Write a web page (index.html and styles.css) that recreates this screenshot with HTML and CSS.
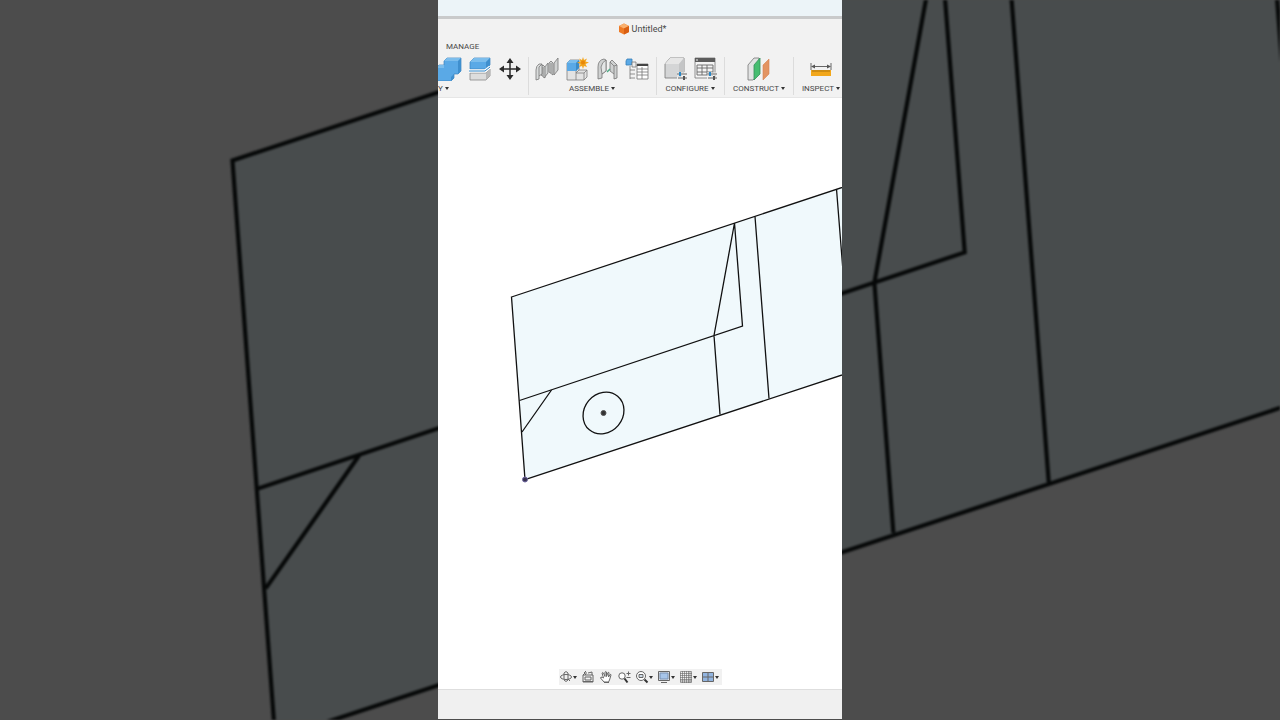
FILE: index.html
```html
<!DOCTYPE html>
<html lang="en">
<head>
    <meta charset="UTF-8">
    <meta name="viewport" content="width=device-width, initial-scale=1.0">
    <title>Untitled*</title>
    <link rel="stylesheet" href="styles.css">
</head>
<body>
    <!-- enlarged sketch behind the window -->
    <svg class="backdrop" viewBox="0 0 1280 720" preserveAspectRatio="xMidYMid slice" aria-hidden="true">
        <use href="#sketch" transform="translate(-1389 -781) scale(3.17)"/>
    </svg>

    <main class="window">
        <div class="strip"></div>
        <header>
            <h1 class="title">
                <svg width="12" height="12" viewBox="0 0 12 12">
                    <path d="M6 .5L11 3v6L6 11.5 1 9V3z" fill="#ee7a25"/>
                    <path d="M6 .5L11 3 6 5.500 1 3z" fill="#f9b06e"/>
                    <path d="M6 5.500L11 3v6l-5 2.500z" fill="#d95f12"/>
                </svg>
                <span>Untitled*</span>
            </h1>
            <nav class="tabs"><a href="#">MANAGE</a></nav>
            <div class="toolbar">
                <section class="group first">
                    <div class="tools">
                        <button aria-label="Combine">
                            <svg viewBox="0 0 24 24">
                                <path d="M-2 11l3-3h5V4l3-3h14v13l-3 3h-4v4l-3 3H-2z" fill="#5aa9e6" stroke="#3b82bd" stroke-width=".7"/>
                                <path d="M6 4l3-3h14l-3 3zM-2 11l3-3h5v3z" fill="#7cbdec"/>
                                <path d="M20 4l3-3v13l-3 3zM13 20l3-3v4l-3 3z" fill="#3f8fce"/>
                            </svg>
                        </button>
                        <button aria-label="Split body">
                            <svg viewBox="0 0 24 24">
                                <path d="M2 5l4-4h16v7l-4 4H2z" fill="#5aa9e6" stroke="#3b82bd" stroke-width=".7"/>
                                <path d="M2 5l4-4h16l-4 4z" fill="#7cbdec"/>
                                <path d="M18 5l4-4v7l-4 4z" fill="#3f8fce"/>
                                <path d="M2 16h16l4-4v7l-4 4H2z" fill="#ddd" stroke="#888" stroke-width=".8"/>
                                <path d="M18 16l4-4v7l-4 4z" fill="#b8b8b8"/>
                                <path d="M1 14h16l5-4" fill="none" stroke="#fff" stroke-width="3"/>
                                <path d="M1 14h16l5-4" fill="none" stroke="#2f86c9"/>
                            </svg>
                        </button>
                        <button aria-label="Move">
                            <svg viewBox="0 0 24 24">
                                <path d="M12 3v18M3 12h18" stroke="#2b2b2b" stroke-width="1.500"/>
                                <path d="M12 1l3.500 5h-7zM12 23l3.500-5h-7zM1 12l5-3.500v7zM23 12l-5-3.500v7z" fill="#2b2b2b"/>
                            </svg>
                        </button>
                    </div>
                    <button class="menu">Y<i></i></button>
                </section>

                <section class="group">
                    <div class="tools">
                        <button aria-label="New joint">
                            <svg viewBox="0 0 24 24" stroke="#777" stroke-width=".8" fill="#d0d2d2">
                                <path d="M19 6l4-5v12l-4 5z"/>
                                <path d="M14 6l2-2 2 2v12l-4-3z"/>
                                <path d="M9 11l4-5v10l-4 5z"/>
                                <path d="M6 10l2-2 2 2v11l-4-3z"/>
                                <path d="M1 13q0-4 3-6h3v10l-3 2v3l-3 1z" fill="#dadcdc"/>
                                <path d="M4 10v9M4 10l3-3M16 6v10M8 10v9" fill="none"/>
                            </svg>
                        </button>
                        <button aria-label="New component">
                            <svg viewBox="0 0 24 24">
                                <path d="M2 6l3-3h9v10h8v7l-3 3H2z" fill="#e3e3e3" stroke="#7d7d7d" stroke-width=".8"/>
                                <path d="M2 13h9v10M11 16l3-3M11 16h8v7M19 16l3-3" fill="none" stroke="#7d7d7d" stroke-width=".8"/>
                                <path d="M2 6l3-3h9v8l-3 3H2z" fill="#5aa9e6"/>
                                <path d="M2 6l3-3h9l-3 3z" fill="#7cbdec"/>
                                <path d="M11 6l3-3v8l-3 3z" fill="#3b8bc8"/>
                                <path d="M18 0l1 3 3-1.500-1.500 3 3.500 1-3.500 1.500L22 10l-3-1-1 3-1-3-3 1 1.500-3L12 5.500l3.500-1L14 1.500 17 3z" fill="#f3a51d"/>
                                <circle cx="18" cy="5.500" r="2" fill="#e88809"/>
                            </svg>
                        </button>
                        <button aria-label="Joint">
                            <svg viewBox="0 0 24 24" stroke="#777" stroke-width=".8" fill="#cfd1d1">
                                <path d="M3 10q0-7 6-8l2 1v11l-4 3v4l-4 1z"/>
                                <path d="M6 10q1-5 5-7v11l-4 3z" fill="#e4e6e6"/>
                                <path d="M15 5l2-2 5 5v13l-3 1v-5l-4-3z"/>
                                <path d="M15 5l4 4 3-1M19 9v8" fill="none"/>
                                <path d="M12 15l3-3" stroke="#4dab86" stroke-width="1.500"/>
                            </svg>
                        </button>
                        <button aria-label="Bill of materials">
                            <svg viewBox="0 0 24 24" fill="none" stroke="#777" stroke-width=".8">
                                <path d="M1 4l1-2h5v5l-1 1H1z" fill="#5aa9e6" stroke="#367fb7"/>
                                <path d="M7 5h4v5H7z" fill="#eee"/>
                                <path d="M5 9v13M5 13h5M5 17h5M5 21h5"/>
                                <path d="M12 7h11v15H12zM12 12h11M12 15h11M12 18h11M17 10v12" fill="#fff"/>
                                <path d="M12 8h11" stroke="#444" stroke-width="2"/>
                            </svg>
                        </button>
                    </div>
                    <button class="menu">ASSEMBLE<i></i></button>
                </section>

                <section class="group">
                    <div class="tools">
                        <button aria-label="Create configuration">
                            <svg viewBox="0 0 24 24">
                                <path d="M2 7l5-6h14v14l-5 6H2z" fill="#d4d5d6" stroke="#777" stroke-width=".8"/>
                                <path d="M2 7l5-6h14l-5 6z" fill="#e6e6e6"/>
                                <path d="M16 7l5-6v14l-5 6z" fill="#c4c5c6"/>
                                <path d="M14 17h10M14 21h10" stroke="#f0f0f0" stroke-width="3"/>
                                <path d="M14 17h10M15 21h9" stroke="#666"/>
                                <path d="M17 15v4" stroke="#2788c8" stroke-width="2"/>
                                <path d="M21 19v4" stroke="#555" stroke-width="2"/>
                            </svg>
                        </button>
                        <button aria-label="Configuration table">
                            <svg viewBox="0 0 24 24">
                                <path d="M2 1h20v20H2z" fill="#f4f4f4" stroke="#777" stroke-width=".8"/>
                                <path d="M2 1h20v4H2z" fill="#5c5c5c"/>
                                <path d="M3 3h2" stroke="#eee"/>
                                <path d="M4 8h16v10H4zM4 11h16M4 15h16M9 8v10M14 8v10" fill="none" stroke="#666" stroke-width=".9"/>
                                <path d="M14 17h10M14 21h10" stroke="#f0f0f0" stroke-width="3"/>
                                <path d="M14 17h10M15 21h9" stroke="#666"/>
                                <path d="M17 15v4" stroke="#2788c8" stroke-width="2"/>
                                <path d="M21 19v4" stroke="#555" stroke-width="2"/>
                            </svg>
                        </button>
                    </div>
                    <button class="menu">CONFIGURE<i></i></button>
                </section>

                <section class="group">
                    <div class="tools">
                        <button aria-label="Offset plane">
                            <svg viewBox="0 0 24 24">
                                <path d="M1 8l6-7h5v16l-6 6H1z" fill="#e2e3e3" stroke="#777" stroke-width=".8"/>
                                <path d="M7 8l6-7v16l-6 6z" fill="#46bd70" stroke="#35915a" stroke-width=".8"/>
                                <path d="M16 8l6-6v15l-6 6z" fill="#e39462" stroke="#d58250" stroke-width=".6"/>
                            </svg>
                        </button>
                    </div>
                    <button class="menu">CONSTRUCT<i></i></button>
                </section>

                <section class="group">
                    <div class="tools">
                        <button aria-label="Measure">
                            <svg viewBox="0 0 24 24">
                                <path d="M2 6v7M22 6v7M3 9.500h18" stroke="#666"/>
                                <path d="M2 9.500l4-2v4zM22 9.500l-4-2v4z" fill="#555"/>
                                <path d="M2 13h20v6H2z" fill="#f2a71b"/>
                                <path d="M4 13v2M6 13v2M8 13v2M10 13v2M12 13v2M14 13v2M16 13v2M18 13v2M20 13v2" stroke="#9a6509" stroke-width=".8"/>
                            </svg>
                        </button>
                    </div>
                    <button class="menu">INSPECT<i></i></button>
                </section>
            </div>
        </header>

        <div class="canvas">
            <svg class="drawing" viewBox="438 98 404 571">
                <g id="sketch">
                    <path class="face" d="M511.500 297L990 138.500 1003 322 525 479.500z"/>
                    <path class="edge" d="M519.500 400.500L742.500 326 734.500 223 714 335.500 720 414.500"/>
                    <path class="edge" d="M551.500 390L522 432M755 216.500L769 398.500M836.500 189L851 372"/>
                    <ellipse class="edge" cx="603.500" cy="413" rx="22" ry="19.300" transform="rotate(-50 603.500 413)"/>
                    <circle class="center" cx="603.500" cy="413" r="2.500"/>
                </g>
                <circle cx="525" cy="479.500" r="2.500" fill="#37324e" stroke="#7169a3"/>
            </svg>

            <nav class="navbar">
                <button aria-label="Orbit">
                    <svg viewBox="0 0 14 14">
                        <ellipse cx="7" cy="7" rx="5.500" ry="2.500"/>
                        <path d="M5 9V3q2-3 4 0v7q-2 3-4 0M9 9l2 2"/>
                    </svg><i></i>
                </button>
                <button aria-label="Look at">
                    <svg viewBox="0 0 14 14">
                        <path d="M2 5h10v7H2zM4 7h6v3H4zM2 5l2-2h2M7 3l4-1v3M5 1L3 3l2 2"/>
                        <path d="M2 11.500h10"/>
                    </svg>
                </button>
                <button aria-label="Pan">
                    <svg viewBox="0 0 14 14">
                        <path d="M5 12L1.500 8q0-1.500 2-.5L4.500 8 3 3q1-1 1.500 0L6 6.500V2q1-1 1.500 0v4.500L9 2.500q1-.5 1 .5L9.500 7 11 4.500q1-.5 1 .5l-1.500 5L9.500 12z" fill="#fff"/>
                        <path d="M5 12.500h5"/>
                    </svg>
                </button>
                <button aria-label="Zoom">
                    <svg viewBox="0 0 14 14">
                        <circle cx="5" cy="6" r="3.200" fill="#fff"/>
                        <path d="M7.500 8.500l3 4" stroke="#333" stroke-width="2"/>
                        <path d="M9.500 3.500h4M11.500 1.500v4M9.500 7.500h4"/>
                    </svg>
                </button>
                <button aria-label="Fit">
                    <svg viewBox="0 0 14 14">
                        <circle cx="6" cy="6" r="4.500" fill="#fff"/>
                        <path d="M4 4.500h4v3H4z" fill="#cfdce8"/>
                        <path d="M9.500 9.500l3 3" stroke="#333" stroke-width="2"/>
                    </svg><i></i>
                </button>
                <button aria-label="Display settings">
                    <svg viewBox="0 0 14 14">
                        <path d="M1.500 1.500h11v9h-11z" fill="#dfe3e8"/>
                        <path d="M3 3h8v6H3z" fill="#a7c5ea" stroke="#7890b2"/>
                        <path d="M4 12.500h6"/>
                    </svg><i></i>
                </button>
                <button aria-label="Grid and snaps">
                    <svg viewBox="0 0 14 14">
                        <path d="M1.500 1.500h11v11h-11zM3.500 1v12M5.500 1v12M7.500 1v12M9.500 1v12M11 1v12M1 3.500h12M1 5.500h12M1 7.500h12M1 9.500h12M1 11h12" stroke-width=".6"/>
                    </svg><i></i>
                </button>
                <button aria-label="Viewports">
                    <svg viewBox="0 0 14 14">
                        <path d="M1.500 2.500h11v9h-11z" fill="#91b4e0"/>
                        <path d="M7 2v10M1 7h12"/>
                    </svg><i></i>
                </button>
            </nav>
        </div>
        <footer></footer>
    </main>
</body>
</html>
```
FILE: styles.css
```css
*{
    margin: 0;
    padding: 0;
    box-sizing: border-box;
}
body{
    min-height: 100vh;
    display: grid;
    grid-template-columns: 438fr 404fr 438fr;
    background-color: #4c4c4c;
    font-family: "Liberation Sans Narrow", Roboto, sans-serif;
    font-size: 8px;
    color: #484848;
    overflow: hidden;
}
.backdrop{
    position: absolute;
    top: 0;
    left: 0;
    width: 100%;
    height: 100%;
    z-index: -1;
    filter: blur(1px);
    --face: #484c4d;
    --edge: #060808;
}
.window{
    grid-column: 2;
    min-width: 0;
    margin-bottom: 1px;
    display: flex;
    flex-direction: column;
    background-color: #fff;
    overflow: hidden;
}
.strip{
    height: 19px;
    background-color: #ecf4f8;
    border-bottom: 3px solid #c9cacb;
}
header{
    background-color: #f2f2f2;
    border-bottom: 1px solid #e6e6e6;
}
.title{
    height: 20px;
    padding-left: 4px;
    display: flex;
    align-items: center;
    justify-content: center;
    gap: 2px;
    font-size: 9px;
    font-weight: 400;
}
.tabs{
    height: 16px;
    padding-left: 8px;
    line-height: 15px;
}
.tabs a{
    color: inherit;
    text-decoration: none;
}
button{
    border: none;
    background: none;
    color: inherit;
    font: inherit;
    display: flex;
    align-items: center;
}
/* dropdown arrow */
i{
    flex: none;
    border: 2px solid transparent;
    border-top: 3px solid #333;
    border-bottom: none;
}
.toolbar{
    display: flex;
    height: 42px;
    padding: 2px 0;
}
.group{
    flex: none;
    display: flex;
    flex-direction: column;
    align-items: center;
    padding: 0 7px 0 6px;
}
.group + .group{
    border-left: 1px solid #dcdcdc;
}
.group:nth-child(n+4){
    padding: 0 8px;
}
.first{
    align-items: flex-start;
    padding: 0 6px 0 0;
}
.tools{
    display: flex;
    gap: 6px;
}
.tools svg{
    width: 24px;
    height: 24px;
    display: block;
}
.menu{
    height: 16px;
    gap: 2px;
}
.canvas{
    flex: 1;
    min-height: 0;
    display: flex;
    flex-direction: column;
    align-items: center;
    padding-bottom: 4px;
    --face: #f0f9fc;
    --edge: #111;
}
.drawing{
    flex: 1;
    min-height: 0;
    width: 100%;
}
.face{
    fill: var(--face);
    stroke: var(--edge);
    stroke-width: 1.3;
}
.edge{
    fill: none;
    stroke: var(--edge);
    stroke-width: 1.3;
}
.center{
    fill: #333;
    stroke: #555;
}
.navbar{
    display: flex;
    gap: 4px;
    height: 16px;
    padding-right: 3px;
    background-color: #f1f1f1;
}
.navbar svg{
    width: 14px;
    height: 14px;
    fill: none;
    stroke: #666;
    stroke-width: 1;
}
footer{
    height: 30px;
    background-color: #f0f0f0;
    border-top: 1px solid #dedede;
}
```
